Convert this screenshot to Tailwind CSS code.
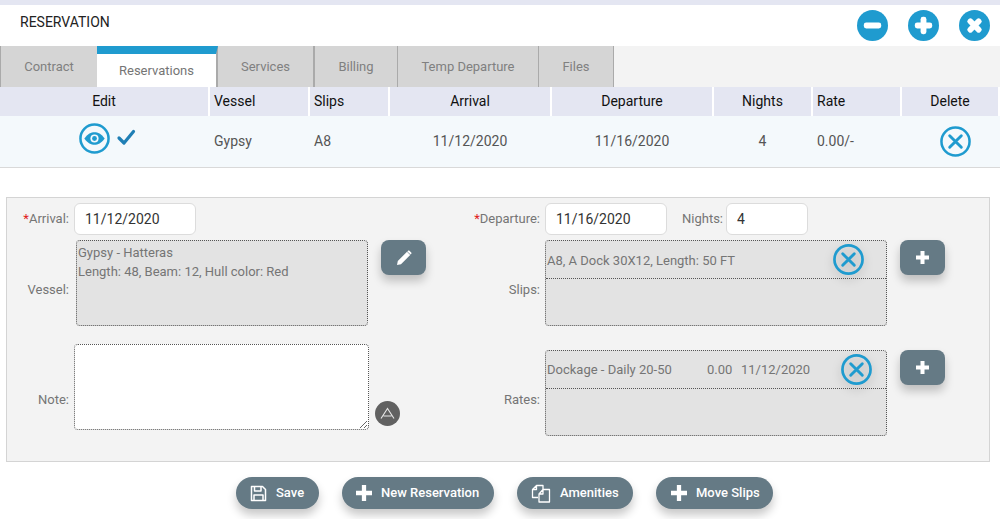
<!DOCTYPE html>
<html lang="en">
<head>
    <meta charset="UTF-8">
    <title>Reservation</title>
    <script src="https://cdn.jsdelivr.net/npm/@tailwindcss/browser@4"></script>
</head>
<body class="bg-white font-['Roboto',sans-serif] text-[13px] text-[#757575] w-[1000px] h-[519px] overflow-hidden">
    <div class="h-[5px] bg-[#e4e6f2]"></div>

    <!-- title bar -->
    <div class="h-[41px] flex justify-between bg-white">
        <div class="pl-[20px] pt-[9px] text-[14px] leading-[16px] text-[#222]">RESERVATION</div>
        <div class="flex gap-[20px] pr-[10px] pt-[5px]">
            <svg class="w-[31px] h-[31px]" viewBox="0 0 32 32"><circle cx="16" cy="16" r="16" fill="#1f9bcf"/><rect x="7" y="13" width="18" height="6" rx="2.500" fill="#fff"/></svg>
            <svg class="w-[31px] h-[31px]" viewBox="0 0 32 32"><circle cx="16" cy="16" r="16" fill="#1f9bcf"/><rect x="7" y="13" width="18" height="6" rx="2.500" fill="#fff"/><rect x="13" y="7" width="6" height="18" rx="2.500" fill="#fff"/></svg>
            <svg class="w-[31px] h-[31px]" viewBox="0 0 32 32"><circle cx="16" cy="16" r="16" fill="#1f9bcf"/><g transform="rotate(45 16 16)"><rect x="7" y="13" width="18" height="6" rx="2.500" fill="#fff"/><rect x="13" y="7" width="6" height="18" rx="2.500" fill="#fff"/></g></svg>
        </div>
    </div>

    <!-- tabs -->
    <div class="h-[41px] flex bg-[#f3f3f3]">
        <div class="w-[97px] bg-[#d5d5d5] border-l border-l-[#aaa] text-center pt-[13px] leading-[16px] text-[#808080]">Contract</div>
        <div class="w-[121px] bg-white border-t-[8px] border-t-[#1f9bcf] border-r-2 border-r-[#aaa] text-center pt-[9px] leading-[16px] text-[#757575]">Reservations</div>
        <div class="w-[97px] bg-[#d5d5d5] border-r-2 border-r-[#aaa] text-center pt-[13px] leading-[16px] text-[#808080]">Services</div>
        <div class="w-[83px] bg-[#d5d5d5] border-r border-r-[#aaa] text-center pt-[13px] leading-[16px] text-[#808080]">Billing</div>
        <div class="w-[141px] bg-[#d5d5d5] border-r border-r-[#aaa] text-center pt-[13px] leading-[16px] text-[#808080]">Temp Departure</div>
        <div class="w-[75px] bg-[#d5d5d5] border-r border-r-[#aaa] text-center pt-[13px] leading-[16px] text-[#808080]">Files</div>
    </div>

    <!-- table -->
    <div class="grid grid-cols-[208px_98px_78px_160px_160px_97px_87px_96px] gap-x-[2px] h-[29px] text-[14px] leading-[29px] text-[#111] pr-[2px]">
        <div class="bg-[#e4e6f2] text-center">Edit</div>
        <div class="bg-[#e4e6f2] pl-[4px]">Vessel</div>
        <div class="bg-[#e4e6f2] pl-[4px]">Slips</div>
        <div class="bg-[#e4e6f2] text-center">Arrival</div>
        <div class="bg-[#e4e6f2] text-center">Departure</div>
        <div class="bg-[#e4e6f2] text-center">Nights</div>
        <div class="bg-[#e4e6f2] pl-[4px]">Rate</div>
        <div class="bg-[#e4e6f2] text-center">Delete</div>
    </div>
    <div class="grid grid-cols-[208px_98px_78px_160px_160px_97px_87px_96px] gap-x-[2px] h-[52px] items-center bg-[#f4f9fc] border-b border-b-[#d9d9d9] text-[14px] text-[#555] pr-[2px]">
        <div class="flex items-center justify-center gap-[6px] pb-[7px] pl-[6px]">
            <svg class="w-[31px] h-[31px]" viewBox="0 0 32 32"><circle cx="16" cy="16" r="14.500" fill="none" stroke="#1f9bcf" stroke-width="2.600"/><path d="M5.500 16C9 11 12.500 9.500 16 9.500S23 11 26.500 16C23 21 19.500 22.500 16 22.500S9 21 5.500 16Z" fill="#1f9bcf"/><circle cx="16" cy="16" r="4.200" fill="#f4f9fc"/><circle cx="16" cy="16" r="2.500" fill="#1f9bcf"/></svg>
            <svg class="w-[20px] h-[20px] mb-[3px]" viewBox="0 0 20 20"><path d="M3 11l5 5L17.500 4.500" fill="none" stroke="#1f7fb5" stroke-width="3.200" stroke-linecap="round" stroke-linejoin="round"/></svg>
        </div>
        <div class="pl-[4px]">Gypsy</div>
        <div class="pl-[4px]">A8</div>
        <div class="text-center">11/12/2020</div>
        <div class="text-center">11/16/2020</div>
        <div class="text-center">4</div>
        <div class="pl-[4px]">0.00/-</div>
        <div class="flex justify-center pl-[10px]">
            <svg class="w-[31px] h-[31px]" viewBox="0 0 32 32"><circle cx="16" cy="16" r="14.500" fill="none" stroke="#1f9bcf" stroke-width="2.600"/><path d="M10 10l12 12M22 10L10 22" stroke="#1f9bcf" stroke-width="3" stroke-linecap="round"/></svg>
        </div>
    </div>

    <!-- detail panel -->
    <div class="mt-[29px] ml-[6px] w-[984px] h-[265px] bg-[#f3f3f3] border border-[#d4d4d4] flex">
        <div class="w-[465px] pt-[5px]">
            <div class="flex items-center h-[32px]">
                <label class="w-[62px] text-right"><span class="text-[#e01b1b]">*</span>Arrival:</label>
                <input type="text" value="11/12/2020" class="ml-[5px] w-[122px] h-[32px] bg-white border border-[#dcdcdc] rounded-[6px] pl-[10px] text-[14px] text-[#333] outline-none">
            </div>
            <div class="flex items-center mt-[5px] h-[86px]">
                <label class="w-[62px] text-right pt-[13px]">Vessel:</label>
                <div class="ml-[7px] w-[292px] h-[86px] bg-[#e3e3e3] border border-dotted border-[#555] rounded-[4px] pl-[1px] pt-[2px] leading-[19px]">
                    Gypsy - Hatteras<br>Length: 48, Beam: 12, Hull color: Red
                </div>
                <button class="self-start ml-[13px] w-[45px] h-[35px] rounded-[8px] bg-[#657a85] shadow-[0_6px_10px_rgba(0,0,0,0.22)] flex items-center justify-center">
                    <svg class="w-[16px] h-[16px]" viewBox="0 0 16 16"><path d="M11 1.800l3.200 3.200L5 14.200l-4 .8.800-4zM12 .8c.5-.4 1-.4 1.400 0l1.800 1.800c.4.4.4 1 0 1.400l-.6.600-3.200-3.200z" fill="#fff"/></svg>
                </button>
            </div>
            <div class="flex items-center mt-[18px] h-[86px]">
                <label class="w-[62px] text-right translate-y-[13px]">Note:</label>
                <textarea class="ml-[5px] w-[295px] h-[86px] bg-white border border-dotted border-[#555] rounded-[4px] outline-none"></textarea>
                <div class="self-end ml-[6px] mb-[4px] w-[25px] h-[25px] rounded-full bg-[#616161] flex items-center justify-center">
                    <svg class="w-[15px] h-[13px]" viewBox="0 0 15 13"><path d="M1 11.500L7.500 1.500 14 11.500M3.500 9h8" fill="none" stroke="#e8e8e8" stroke-width="1.100"/></svg>
                </div>
            </div>
        </div>
        <div class="flex-1 pt-[5px]">
            <div class="flex items-center h-[32px]">
                <label class="w-[68px] text-right"><span class="text-[#e01b1b]">*</span>Departure:</label>
                <input type="text" value="11/16/2020" class="ml-[5px] w-[122px] h-[32px] bg-white border border-[#dcdcdc] rounded-[6px] pl-[10px] text-[14px] text-[#333] outline-none">
                <label class="ml-[15px]">Nights:</label>
                <input type="text" value="4" class="ml-[3px] w-[82px] h-[32px] bg-white border border-[#dcdcdc] rounded-[6px] pl-[10px] text-[14px] text-[#333] outline-none">
            </div>
            <div class="flex items-center mt-[5px] h-[86px]">
                <label class="w-[68px] text-right pt-[13px]">Slips:</label>
                <div class="ml-[5px] w-[342px] h-[86px] bg-[#e3e3e3] border border-dotted border-[#555] rounded-[4px]">
                    <div class="h-[38px] flex items-center justify-between border-b border-dotted border-[#555] pl-[1px] pr-[22px]">
                        <span class="pt-[2px]">A8, A Dock 30X12, Length: 50 FT</span>
                        <svg class="w-[31px] h-[31px] drop-shadow-[0_4px_5px_rgba(0,0,0,0.2)]" viewBox="0 0 32 32"><circle cx="16" cy="16" r="14.500" fill="none" stroke="#1f9bcf" stroke-width="2.800"/><path d="M10 10l12 12M22 10L10 22" stroke="#1f9bcf" stroke-width="3" stroke-linecap="round"/></svg>
                    </div>
                </div>
                <button class="self-start ml-[13px] w-[45px] h-[35px] rounded-[8px] bg-[#657a85] shadow-[0_6px_10px_rgba(0,0,0,0.22)] flex items-center justify-center">
                    <svg class="w-[15px] h-[15px]" viewBox="0 0 15 15"><path d="M5.500 1h4v4.500H14v4H9.500V14h-4V9.500H1v-4h4.500z" fill="#fff"/></svg>
                </button>
            </div>
            <div class="flex items-center mt-[24px] h-[86px]">
                <label class="w-[68px] text-right pt-[13px]">Rates:</label>
                <div class="ml-[5px] w-[342px] h-[86px] bg-[#e3e3e3] border border-dotted border-[#555] rounded-[4px]">
                    <div class="h-[38px] flex items-center border-b border-dotted border-[#555] pl-[1px]">
                        <span class="w-[160px]">Dockage - Daily 20-50</span>
                        <span class="w-[33px]">0.00</span>
                        <span class="ml-[1px] w-[90px]">11/12/2020</span>
                        <svg class="w-[31px] h-[31px] ml-[10px] drop-shadow-[0_4px_5px_rgba(0,0,0,0.2)]" viewBox="0 0 32 32"><circle cx="16" cy="16" r="14.500" fill="none" stroke="#1f9bcf" stroke-width="2.800"/><path d="M10 10l12 12M22 10L10 22" stroke="#1f9bcf" stroke-width="3" stroke-linecap="round"/></svg>
                    </div>
                </div>
                <button class="self-start ml-[13px] w-[45px] h-[35px] rounded-[8px] bg-[#657a85] shadow-[0_6px_10px_rgba(0,0,0,0.22)] flex items-center justify-center">
                    <svg class="w-[15px] h-[15px]" viewBox="0 0 15 15"><path d="M5.500 1h4v4.500H14v4H9.500V14h-4V9.500H1v-4h4.500z" fill="#fff"/></svg>
                </button>
            </div>
        </div>
    </div>

    <!-- action buttons -->
    <div class="mt-[15px] flex justify-start pl-[236px] gap-[23px] text-white text-[13px] font-medium">
        <button class="h-[32px] w-[83px] rounded-full bg-[#657a85] shadow-[0_6px_10px_rgba(0,0,0,0.22)] flex items-center pl-[14px] gap-[9px]">
            <svg class="w-[17px] h-[17px]" viewBox="0 0 17 17"><path d="M1.500 1.500h11l3 3v11h-14zM4.500 1.500v4.500h6.500V1.500M4 15.500V10h9v5.500" fill="none" stroke="#fff" stroke-width="1.500" stroke-linejoin="round"/></svg>
            Save
        </button>
        <button class="h-[32px] w-[152px] rounded-full bg-[#657a85] shadow-[0_6px_10px_rgba(0,0,0,0.22)] flex items-center pl-[14px] gap-[9px]">
            <svg class="w-[16px] h-[16px]" viewBox="0 0 15 15"><path d="M5.500 0h4v5.500H15v4H9.500V15h-4V9.500H0v-4h5.500z" fill="#fff"/></svg>
            New Reservation
        </button>
        <button class="h-[32px] w-[116px] rounded-full bg-[#657a85] shadow-[0_6px_10px_rgba(0,0,0,0.22)] flex items-center pl-[14px] gap-[9px]">
            <svg class="w-[20px] h-[19px]" viewBox="0 0 20 19"><path d="M7 13.500H1.500V5.500L5.500 1.500H12V5.500M5.500 1.500V5.500H1.500M8 18V10L12 5.500H18.500V18zM12 5.500V10H8" fill="none" stroke="#fff" stroke-width="1.300" stroke-linejoin="round"/></svg>
            Amenities
        </button>
        <button class="h-[32px] w-[117px] rounded-full bg-[#657a85] shadow-[0_6px_10px_rgba(0,0,0,0.22)] flex items-center pl-[15px] gap-[9px]">
            <svg class="w-[16px] h-[16px]" viewBox="0 0 15 15"><path d="M5.500 0h4v5.500H15v4H9.500V15h-4V9.500H0v-4h5.500z" fill="#fff"/></svg>
            Move Slips
        </button>
    </div>
</body>
</html>
